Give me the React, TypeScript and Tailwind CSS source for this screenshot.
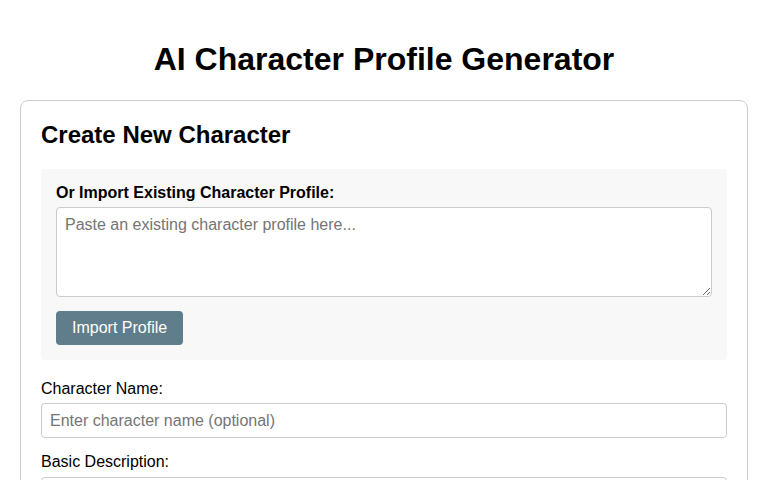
import React from "react";

export default function App() {
  return (
    <div className="min-h-screen bg-white p-5 text-black" style={{ fontFamily: '"Liberation Sans", Arial, sans-serif' }}>
      <h1 className="mt-[21px] mb-[22px] text-center text-[32px] font-bold leading-[37px]">AI Character Profile Generator</h1>
      <div className="rounded-lg border border-[#cccccc] bg-white p-5">
        <h2 className="mb-5 text-[24px] font-bold leading-[28px]">Create New Character</h2>
        <div className="mb-5 rounded bg-[#f8f8f8] p-[15px]">
          <label className="mb-[5px] block text-[16px] font-bold leading-[18px]">Or Import Existing Character Profile:</label>
          <textarea
            className="block h-[90px] w-full rounded border border-[#cccccc] bg-white px-2 py-2 text-[16px] leading-[18px] placeholder:text-[#757575]"
            placeholder="Paste an existing character profile here..."
          />
          <button className="mt-[14px] rounded bg-[#607d8b] px-4 py-2 text-[16px] leading-[18px] text-white">Import Profile</button>
        </div>
        <label className="mb-[5px] block text-[16px] leading-[18px]">Character Name:</label>
        <input
          className="mb-[15px] block h-[35px] w-full rounded border border-[#cccccc] bg-white px-2 text-[16px] placeholder:text-[#757575]"
          placeholder="Enter character name (optional)"
        />
        <label className="mb-[6px] block text-[16px] leading-[18px]">Basic Description:</label>
        <textarea className="block h-[90px] w-full rounded border border-[#cccccc] bg-white px-2 py-2 text-[16px]" />
      </div>
    </div>
  );
}
